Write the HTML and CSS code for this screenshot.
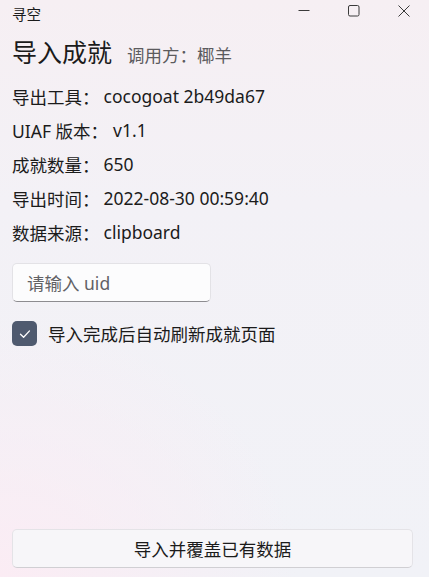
FILE: index.html
```html
<!DOCTYPE html>
<html lang="zh-CN">
<head>
<meta charset="utf-8">
<title>寻空</title>
<link rel="stylesheet" href="styles.css">
</head>
<body>
<div class="window">
  <div class="titlebar">
    <span class="app-title">寻空</span>
    <div class="caption-buttons">
      <span class="cap-btn">
        <svg width="12" height="12" viewBox="0 0 12 12"><path d="M0.5 5.5H11.5" stroke="#3a3a3a" stroke-width="1"/></svg>
      </span>
      <span class="cap-btn">
        <svg width="12" height="12" viewBox="0 0 12 12"><rect x="0.5" y="0.5" width="10.5" height="10.5" rx="1.5" fill="none" stroke="#3a3a3a" stroke-width="1"/></svg>
      </span>
      <span class="cap-btn">
        <svg width="12" height="12" viewBox="0 0 12 12"><path d="M0.5 0.5L11.5 11.5M11.5 0.5L0.5 11.5" stroke="#3a3a3a" stroke-width="1"/></svg>
      </span>
    </div>
  </div>
  <div class="content">
    <div class="heading">
      <span class="heading-title">导入成就</span>
      <span class="heading-sub">调用方：椰羊</span>
    </div>
    <div class="info">
      <div class="row"><span class="label">导出工具：</span><span class="value">cocogoat 2b49da67</span></div>
      <div class="row"><span class="label">UIAF 版本：</span><span class="value value-wide">v1.1</span></div>
      <div class="row"><span class="label">成就数量：</span><span class="value">650</span></div>
      <div class="row"><span class="label">导出时间：</span><span class="value">2022-08-30 00:59:40</span></div>
      <div class="row"><span class="label">数据来源：</span><span class="value">clipboard</span></div>
    </div>
    <input class="uid-input" type="text" placeholder="请输入 uid">
    <label class="check-row">
      <span class="check-box">
        <svg width="14" height="14" viewBox="0 0 14 14"><path d="M2.5 7.3L5.6 10.2L11.5 3.9" fill="none" stroke="#ffffff" stroke-width="1.3" stroke-linecap="round" stroke-linejoin="round"/></svg>
      </span>
      <span class="check-label">导入完成后自动刷新成就页面</span>
    </label>
    <div class="spacer"></div>
    <button class="primary-btn" type="button">导入并覆盖已有数据</button>
  </div>
</div>
</body>
</html>
```

FILE: styles.css
```css
* { box-sizing: border-box; }
html, body {
  margin: 0;
  padding: 0;
  height: 100%;
}
body {
  font-family: "Noto Sans", "Noto Sans CJK SC", sans-serif;
  color: #1b1b1b;
  background:
    radial-gradient(ellipse 70% 45% at 0% 100%, rgba(251, 236, 244, 1) 0%, rgba(251, 236, 244, 0) 100%),
    linear-gradient(180deg, #f6eff3 0%, #f3f1f6 35%, #f1f2f7 100%);
  overflow: hidden;
}
.window {
  height: 577px;
  display: flex;
  flex-direction: column;
}
.titlebar {
  height: 28px;
  display: flex;
  align-items: center;
  justify-content: space-between;
  padding-left: 12px;
}
.app-title {
  font-family: "Noto Sans CJK SC", sans-serif;
  font-size: 14.5px;
  line-height: 28px;
  color: #1b1b1b;
}
.caption-buttons {
  display: flex;
  align-self: flex-start;
  height: 22px;
  align-items: center;
  padding-right: 19px;
  gap: 38px;
}
.cap-btn {
  width: 12px;
  height: 12px;
  display: flex;
}
.content {
  flex: 1;
  display: flex;
  flex-direction: column;
  padding: 0 16px 9px 12px;
}
.heading {
  margin-top: 5px;
  height: 36px;
  display: flex;
  align-items: baseline;
  gap: 15px;
}
.heading-title {
  font-family: "Noto Sans CJK SC", sans-serif;
  font-size: 25px;
  line-height: 36px;
}
.heading-sub {
  font-family: "Noto Sans CJK SC", sans-serif;
  font-size: 17.5px;
  color: #5c5b5e;
}
.info {
  margin-top: 10px;
  display: flex;
  flex-direction: column;
}
.row {
  height: 34px;
  display: flex;
  align-items: center;
  font-size: 17.5px;
  white-space: nowrap;
}
.label {
  font-family: "Noto Sans", "Noto Sans CJK SC", sans-serif;
}
.value {
  margin-left: 4px;
}
.value-wide {
  margin-left: 5px;
}
.uid-input {
  margin-top: 14px;
  width: 199px;
  height: 39px;
  border: 1px solid #e3e2e6;
  border-bottom-color: #8d8c90;
  border-radius: 5px;
  background: #fcfcfd;
  padding: 0 0 0 14px;
  font-family: "Noto Sans", "Noto Sans CJK SC", sans-serif;
  font-size: 17.5px;
  color: #1b1b1b;
  outline: none;
}
.uid-input::placeholder {
  color: #626165;
}
.check-row {
  margin-top: 19px;
  display: flex;
  align-items: center;
  gap: 11px;
  height: 25px;
}
.check-box {
  width: 25px;
  height: 25px;
  border-radius: 5px;
  background: #4f5a6f;
  display: flex;
  align-items: center;
  justify-content: center;
}
.check-label {
  font-family: "Noto Sans CJK SC", sans-serif;
  font-size: 17.5px;
}
.spacer {
  flex: 1;
}
.primary-btn {
  height: 39px;
  width: 401px;
  border: 1px solid #e4e3e7;
  border-bottom-color: #d0cfd3;
  border-radius: 5px;
  background: #f7f6f9;
  font-family: "Noto Sans CJK SC", sans-serif;
  font-size: 17.5px;
  color: #1b1b1b;
  padding: 0;
}
```
